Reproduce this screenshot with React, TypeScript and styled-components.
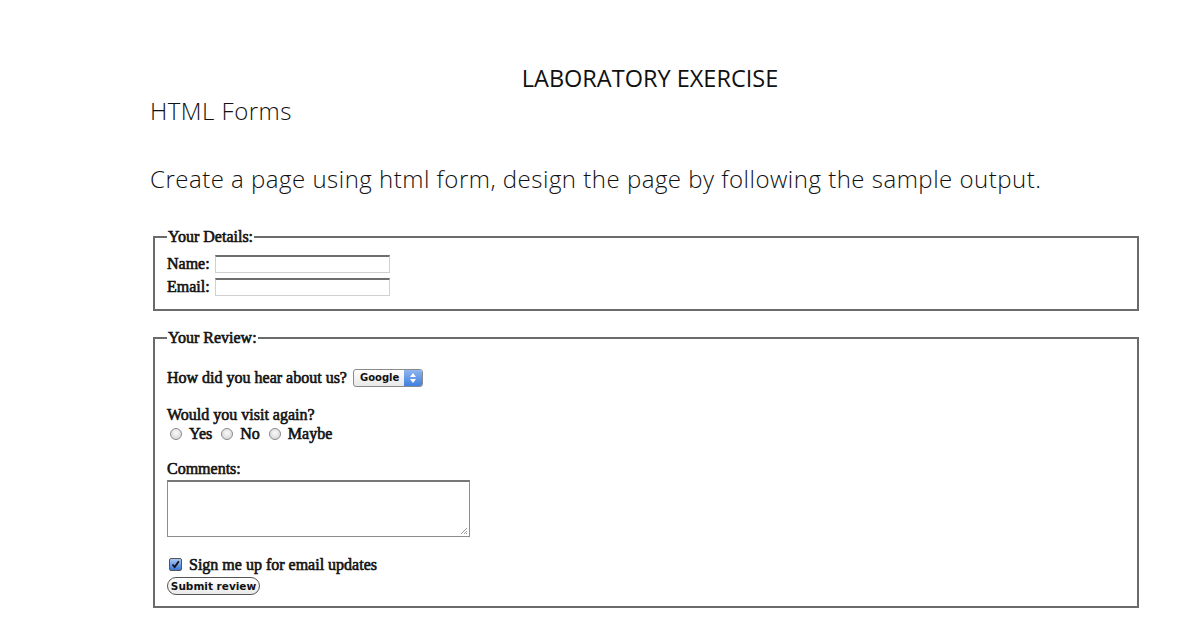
import React from "react";
import styled, { createGlobalStyle } from "styled-components";

const Global = createGlobalStyle`
  html, body { margin: 0; padding: 0; background: #fff; }
  body { width: 1200px; height: 630px; overflow: hidden; }
`;

const Page = styled.div`
  width: 1000px;
  margin-left: 150px;
  padding-top: 60px;
  font-family: "Open Sans", Lato, sans-serif;
  color: #111;
`;

const Title = styled.h1`
  margin: 0;
  text-align: center;
  font-weight: 400;
  font-size: 23.5px;
  line-height: 36px;
`;

const Subtitle = styled.h2`
  margin: 0;
  font-weight: 300;
  font-size: 24px;
  letter-spacing: 0.5px;
  line-height: 30px;
`;

const Instruction = styled.p`
  margin: 38px 0 0 0;
  font-weight: 300;
  font-size: 24px;
  letter-spacing: 0.5px;
  line-height: 30px;
`;

const Form = styled.form`
  margin: 35px 0 0 3px;
  width: 986px;
  font-family: "Liberation Serif", "Times New Roman", serif;
  font-size: 16px;
  color: #111;
  -webkit-text-stroke: 0.6px #111;
  display: flex;
  flex-direction: column;
  gap: 19px;
`;

const Fieldset = styled.fieldset<{ $pad: string }>`
  margin: 0;
  border: 2px solid #6b6b6b;
  padding: ${(p) => p.$pad};
  display: flex;
  flex-direction: column;
`;

const Legend = styled.legend`
  padding: 0 1px;
  margin-left: 0;
  line-height: 16px;
`;

const FieldRow = styled.div`
  display: grid;
  grid-template-columns: 48px 175px;
  align-items: center;
  height: 23px;
`;

const TextInput = styled.input`
  width: 175px;
  height: 18px;
  box-sizing: border-box;
  border: 1px solid #d0d0d0;
  border-top: 2px solid #6e6e6e;
  padding: 0;
  background: #fff;
`;

const Para = styled.div<{ $mt?: number }>`
  margin-top: ${(p) => p.$mt ?? 0}px;
  display: flex;
  align-items: center;
  line-height: 19px;
`;

const FakeSelect = styled.div`
  margin-left: 6px;
  width: 70px;
  height: 18px;
  box-sizing: border-box;
  border: 1px solid #8a8a8a;
  border-radius: 3px;
  display: flex;
  align-items: stretch;
  font-family: "DejaVu Sans", sans-serif;
  font-size: 10px;
  font-weight: 700;
  -webkit-text-stroke: 0;
  background: linear-gradient(#fff, #e8e8e8);
  overflow: hidden;
`;

const SelectText = styled.span`
  flex: 1;
  display: flex;
  align-items: center;
  padding-left: 6px;
`;

const SelectArrows = styled.span`
  width: 18px;
  background: linear-gradient(#8fb6f0, #3f7fe0);
  display: flex;
  align-items: center;
  justify-content: center;
`;

const Radio = styled.span`
  display: inline-block;
  width: 10px;
  height: 10px;
  border-radius: 50%;
  border: 1px solid #8a8a8a;
  background: radial-gradient(circle at 50% 40%, #fafafa, #cfcfcf);
  margin: 0 7px 0 3px;
`;

const RadioLabel = styled.span`
  margin-right: 6px;
`;

const TextArea = styled.div`
  margin-top: 2px;
  width: 303px;
  height: 57px;
  box-sizing: border-box;
  border: 1px solid #8d8d8d;
  border-top: 2px solid #777;
  position: relative;
`;

const Grip = styled.svg`
  position: absolute;
  right: 1px;
  bottom: 1px;
`;

const Check = styled.span`
  display: inline-flex;
  width: 11px;
  height: 11px;
  border: 1px solid #555;
  border-radius: 2px;
  background: linear-gradient(#a9c8f5, #3b78d8);
  margin: 0 7px 0 2px;
  align-items: center;
  justify-content: center;
`;

const Button = styled.div`
  margin-top: 3px;
  width: 93px;
  height: 18px;
  box-sizing: border-box;
  border: 1px solid #555;
  border-radius: 9px;
  display: flex;
  align-items: center;
  justify-content: center;
  font-family: "DejaVu Sans", sans-serif;
  font-size: 10.5px;
  font-weight: 700;
  -webkit-text-stroke: 0;
  background: linear-gradient(#fff, #eaeaea);
`;

export default function App() {
  return (
    <>
      <Global />
      <Page>
        <Title>LABORATORY EXERCISE</Title>
        <Subtitle>HTML Forms</Subtitle>
        <Instruction>
          Create a page using html form, design the page by following the sample output.
        </Instruction>
        <Form>
          <Fieldset $pad="7px 12px 11px 12px">
            <Legend>Your Details:</Legend>
            <FieldRow>
              <span>Name:</span>
              <TextInput />
            </FieldRow>
            <FieldRow>
              <span>Email:</span>
              <TextInput />
            </FieldRow>
          </Fieldset>
          <Fieldset $pad="22px 12px 11px 12px">
            <Legend>Your Review:</Legend>
            <Para>
              How did you hear about us?
              <FakeSelect>
                <SelectText>Google</SelectText>
                <SelectArrows>
                  <svg width="8" height="12" viewBox="0 0 8 12">
                    <path d="M4 1 L7 5 H1 Z" fill="#fff" />
                    <path d="M4 11 L7 7 H1 Z" fill="#fff" />
                  </svg>
                </SelectArrows>
              </FakeSelect>
            </Para>
            <Para $mt={18}>Would you visit again?</Para>
            <Para>
              <Radio />
              <RadioLabel>Yes</RadioLabel>
              <Radio />
              <RadioLabel>No</RadioLabel>
              <Radio />
              <RadioLabel>Maybe</RadioLabel>
            </Para>
            <Para $mt={16}>Comments:</Para>
            <TextArea>
              <Grip width="8" height="8" viewBox="0 0 8 8">
                <path d="M7 1 L1 7 M7 4 L4 7 M7 6 L6 7" stroke="#999" strokeWidth="1" />
              </Grip>
            </TextArea>
            <Para $mt={18}>
              <Check>
                <svg width="9" height="9" viewBox="0 0 9 9">
                  <path d="M1.5 4.5 L3.7 7 L7.8 1.2" stroke="#111" strokeWidth="1.8" fill="none" />
                </svg>
              </Check>
              Sign me up for email updates
            </Para>
            <Button>Submit review</Button>
          </Fieldset>
        </Form>
      </Page>
    </>
  );
}
